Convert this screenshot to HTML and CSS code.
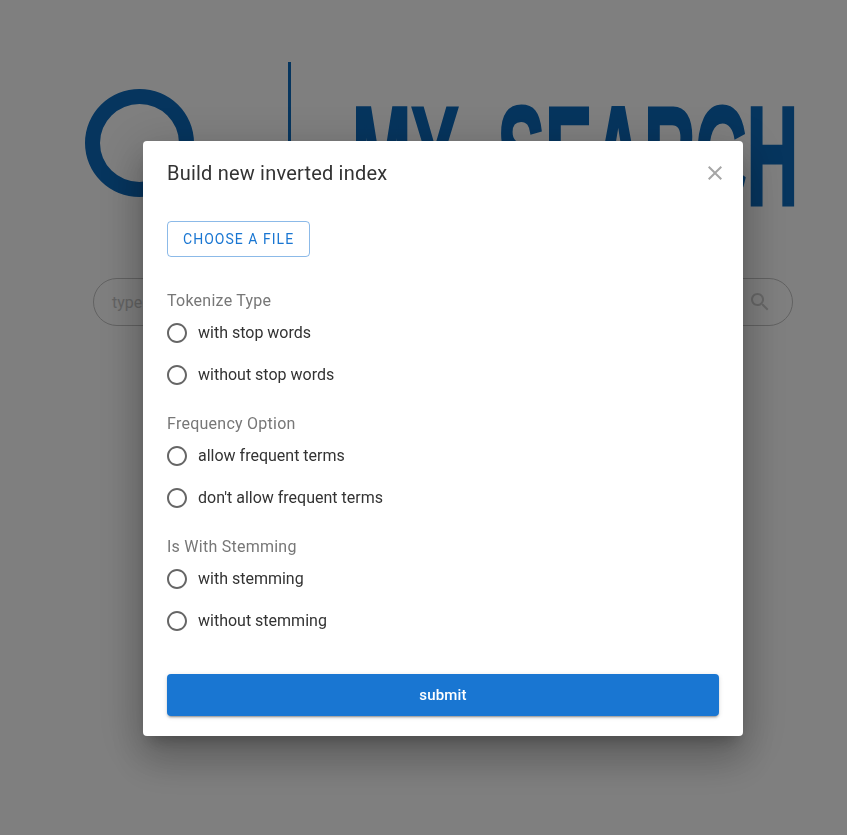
FILE: index.html
```html
<!DOCTYPE html>
<html lang="en">
<head>
<meta charset="utf-8">
<title>My Search</title>
<link rel="stylesheet" href="styles.css">
</head>
<body>
<main class="page">
  <div class="logo">
    <div class="ring"></div>
    <div class="divider"></div>
    <div class="wordmark"><span class="wordmark-text">MY SEARCH</span></div>
  </div>
  <div class="search">
    <span class="search-placeholder">type</span>
    <svg class="search-icon" viewBox="0 0 24 24"><path d="M15.5 14h-.79l-.28-.27C15.41 12.59 16 11.11 16 9.5 16 5.91 13.09 3 9.5 3S3 5.91 3 9.5 5.91 16 9.5 16c1.61 0 3.09-.59 4.23-1.57l.27.28v.79l5 4.99L20.49 19l-4.99-5zm-6 0C7.01 14 5 11.99 5 9.5S7.01 5 9.5 5 14 7.01 14 9.5 11.99 14 9.5 14z"/></svg>
  </div>
</main>
<div class="overlay">
  <section class="dialog">
    <header class="dialog-title">
      <h2 class="title-text">Build new inverted index</h2>
      <svg class="close-icon" viewBox="0 0 24 24"><path d="M19 6.41 17.59 5 12 10.59 6.41 5 5 6.41 10.59 12 5 17.59 6.41 19 12 13.41 17.59 19 19 17.59 13.41 12z"/></svg>
    </header>
    <form class="dialog-content">
      <button type="button" class="file-button">Choose a file</button>
      <div class="groups">
        <fieldset class="group">
          <div class="group-label">Tokenize Type</div>
          <div class="radio-row"><span class="radio-box"><svg class="radio-icon" viewBox="0 0 24 24"><path d="M12 2C6.48 2 2 6.48 2 12s4.48 10 10 10 10-4.48 10-10S17.52 2 12 2zm0 18c-4.42 0-8-3.58-8-8s3.58-8 8-8 8 3.58 8 8-3.58 8-8 8z"/></svg></span><span class="radio-text">with stop words</span></div>
          <div class="radio-row"><span class="radio-box"><svg class="radio-icon" viewBox="0 0 24 24"><path d="M12 2C6.48 2 2 6.48 2 12s4.48 10 10 10 10-4.48 10-10S17.52 2 12 2zm0 18c-4.42 0-8-3.58-8-8s3.58-8 8-8 8 3.58 8 8-3.58 8-8 8z"/></svg></span><span class="radio-text">without stop words</span></div>
        </fieldset>
        <fieldset class="group">
          <div class="group-label">Frequency Option</div>
          <div class="radio-row"><span class="radio-box"><svg class="radio-icon" viewBox="0 0 24 24"><path d="M12 2C6.48 2 2 6.48 2 12s4.48 10 10 10 10-4.48 10-10S17.52 2 12 2zm0 18c-4.42 0-8-3.58-8-8s3.58-8 8-8 8 3.58 8 8-3.58 8-8 8z"/></svg></span><span class="radio-text">allow frequent terms</span></div>
          <div class="radio-row"><span class="radio-box"><svg class="radio-icon" viewBox="0 0 24 24"><path d="M12 2C6.48 2 2 6.48 2 12s4.48 10 10 10 10-4.48 10-10S17.52 2 12 2zm0 18c-4.42 0-8-3.58-8-8s3.58-8 8-8 8 3.58 8 8-3.58 8-8 8z"/></svg></span><span class="radio-text">don't allow frequent terms</span></div>
        </fieldset>
        <fieldset class="group">
          <div class="group-label">Is With Stemming</div>
          <div class="radio-row"><span class="radio-box"><svg class="radio-icon" viewBox="0 0 24 24"><path d="M12 2C6.48 2 2 6.48 2 12s4.48 10 10 10 10-4.48 10-10S17.52 2 12 2zm0 18c-4.42 0-8-3.58-8-8s3.58-8 8-8 8 3.58 8 8-3.58 8-8 8z"/></svg></span><span class="radio-text">with stemming</span></div>
          <div class="radio-row"><span class="radio-box"><svg class="radio-icon" viewBox="0 0 24 24"><path d="M12 2C6.48 2 2 6.48 2 12s4.48 10 10 10 10-4.48 10-10S17.52 2 12 2zm0 18c-4.42 0-8-3.58-8-8s3.58-8 8-8 8 3.58 8 8-3.58 8-8 8z"/></svg></span><span class="radio-text">without stemming</span></div>
        </fieldset>
      </div>
      <button type="button" class="submit-button">submit</button>
    </form>
  </section>
</div>
</body>
</html>
```
FILE: styles.css
```css
* { box-sizing: border-box; }
html, body { height: 100%; }
body {
  margin: 0;
  overflow: hidden;
  background: #fff;
  font-family: Roboto, "Liberation Sans", sans-serif;
}
.page {
  display: flex;
  flex-direction: column;
  padding-top: 62px;
}
.logo {
  display: flex;
  align-items: center;
  height: 162px;
  padding-left: 85px;
}
.ring {
  width: 109px;
  height: 108px;
  border: 15px solid #0c6abc;
  border-radius: 50%;
}
.divider {
  width: 3px;
  height: 162px;
  margin-left: 94px;
  background: #0c6abc;
}
.wordmark {
  width: 442px;
  height: 102px;
  margin: 25px 0 0 61px;
}
.wordmark-text {
  display: block;
  width: 442px;
  font-family: "Liberation Sans", sans-serif;
  font-size: 141px;
  font-weight: 700;
  line-height: 102px;
  word-spacing: 40px;
  white-space: nowrap;
  color: #0c6abc;
  -webkit-text-stroke: 3px #0c6abc;
  transform: scaleX(0.505);
  transform-origin: left center;
}
.search {
  display: flex;
  align-items: center;
  justify-content: space-between;
  width: 700px;
  height: 48px;
  margin: 54px 0 0 93px;
  padding: 0 20px 0 18px;
  border: 1px solid #c4c4c4;
  border-radius: 24px;
}
.search-placeholder {
  font-size: 16px;
  color: #c8c8c8;
}
.search-icon {
  width: 24px;
  height: 24px;
  fill: #cfcfcf;
}
.overlay {
  position: fixed;
  inset: 0;
  display: flex;
  align-items: flex-start;
  padding: 141px 0 0 143px;
  background: rgba(0, 0, 0, 0.5);
}
.dialog {
  width: 600px;
  background: #fff;
  border-radius: 4px;
  box-shadow: 0 11px 15px -7px rgba(0, 0, 0, 0.24), 0 24px 38px 3px rgba(0, 0, 0, 0.17), 0 9px 46px 8px rgba(0, 0, 0, 0.14);
}
.dialog-title {
  display: flex;
  align-items: center;
  justify-content: space-between;
  height: 64px;
  padding: 0 16px 0 24px;
}
.title-text {
  margin: 0;
  font-size: 20px;
  font-weight: 400;
  line-height: 32px;
  letter-spacing: 0.2px;
  color: #333;
}
.close-icon {
  width: 24px;
  height: 24px;
  fill: #a6a6a6;
}
.dialog-content {
  display: flex;
  flex-direction: column;
  align-items: flex-start;
  padding: 16px 24px 20px;
}
.file-button {
  height: 36px;
  padding: 0 15px;
  border: 1px solid rgba(25, 118, 210, 0.5);
  border-radius: 4px;
  background: transparent;
  font-family: inherit;
  font-size: 14px;
  font-weight: 400;
  letter-spacing: 1.03px;
  text-transform: uppercase;
  color: #1976d2;
}
.groups {
  display: flex;
  flex-direction: column;
  gap: 15px;
  margin-top: 31px;
}
.group {
  margin: 0;
  padding: 0;
  border: 0;
}
.group-label {
  height: 24px;
  font-size: 16px;
  line-height: 26px;
  letter-spacing: 0.25px;
  color: #777;
}
.radio-row {
  display: flex;
  align-items: center;
  height: 42px;
  margin-left: -11px;
  font-size: 16px;
  color: #333;
}
.radio-box {
  display: flex;
  padding: 9px;
}
.radio-text {
  margin-bottom: 2px;
}
.radio-icon {
  width: 24px;
  height: 24px;
  fill: #666;
}
.submit-button {
  width: 100%;
  height: 42px;
  margin-top: 32px;
  border: 0;
  border-radius: 4px;
  background: #1976d2;
  font-family: inherit;
  font-size: 15px;
  font-weight: 500;
  letter-spacing: 0.15px;
  color: #fff;
  box-shadow: 0 3px 1px -2px rgba(0, 0, 0, 0.2), 0 2px 2px 0 rgba(0, 0, 0, 0.14), 0 1px 5px 0 rgba(0, 0, 0, 0.12);
}
```
